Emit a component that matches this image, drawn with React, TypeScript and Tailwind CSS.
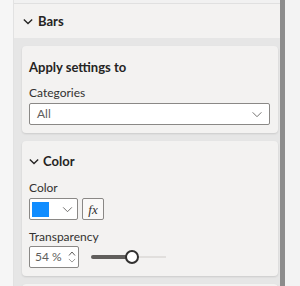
import React from 'react'

const font = { fontFamily: 'Lato, "Open Sans", sans-serif' }

const Chevron = ({ className = '' }: { className?: string }) => (
  <svg viewBox="0 0 12 8" className={className} fill="none" stroke="currentColor" strokeWidth="1.6">
    <polyline points="1,1.5 6,6.5 11,1.5" />
  </svg>
)

const ThinChevron = ({ className = '' }: { className?: string }) => (
  <svg viewBox="0 0 12 8" className={className} fill="none" stroke="currentColor" strokeWidth="1">
    <polyline points="1,1.5 6,6.5 11,1.5" />
  </svg>
)

const Card = ({ children }: { children: React.ReactNode }) => (
  <div className="shrink-0 rounded-[4px] bg-[#f3f2f1] shadow-[0_1px_2px_rgba(0,0,0,0.12)] pl-[7px] pr-[8px]">
    {children}
  </div>
)

export default function App() {
  return (
    <div className="w-[300px] h-[286px] flex bg-[#f3f3f3] overflow-hidden text-[#252423]" style={font}>
      <div className="w-[14px] bg-[#f6f6f6] border-r border-[#e2e2e2]" />
      <div className="w-[266px] flex flex-col min-h-0">
        <div className="shrink-0 h-[4px] bg-[#f1f1f1] border-b border-[#e0e0e0]" />
        <div className="shrink-0 h-[34px] bg-[#f3f2f1] flex items-center pl-[9px] gap-[5px] pt-[1px]">
          <Chevron className="w-[10px] h-[7px] text-[#252423]" />
          <span className="text-[13px] font-bold leading-none">Bars</span>
        </div>
        <div className="flex-1 min-h-0 overflow-hidden bg-[#e6e6e6] pl-[8px] pr-[2px] pt-[8px] flex flex-col gap-[8px]">
          <Card>
            <div className="pt-[13px] pb-[8px] flex flex-col">
              <div className="text-[13px] font-bold leading-[16px]">Apply settings to</div>
              <div className="mt-[10px] text-[12px] leading-[16px] text-[#323130]">Categories</div>
              <div className="mt-[2px] h-[22px] bg-white border border-[#8a8886] rounded-[2px] flex items-center justify-between pl-[7px] pr-[6px]">
                <span className="text-[12px] text-[#605e5c]">All</span>
                <ThinChevron className="w-[12px] h-[7px] text-[#605e5c]" />
              </div>
            </div>
          </Card>
          <Card>
            <div className="pt-[12px] pb-[8px] flex flex-col">
              <div className="flex items-center gap-[4px] h-[16px]">
                <Chevron className="w-[10px] h-[7px] text-[#252423]" />
                <span className="text-[13px] font-bold leading-none">Color</span>
              </div>
              <div className="mt-[11px] text-[12px] leading-[16px] text-[#323130]">Color</div>
              <div className="mt-[2px] flex gap-[4px]">
                <div className="w-[49px] h-[22px] bg-white border border-[#8a8886] rounded-[2px] flex items-center pl-[2px] pr-[4px] justify-between">
                  <div className="w-[17px] h-[15px] bg-[#118dff]" />
                  <ThinChevron className="w-[11px] h-[7px] text-[#605e5c]" />
                </div>
                <div className="w-[22px] h-[22px] bg-[#faf9f8] border border-[#8a8886] rounded-[2px] flex items-center justify-center">
                  <span className="text-[13px] italic text-[#323130] leading-none" style={{ fontFamily: '"Liberation Serif", serif' }}>fx</span>
                </div>
              </div>
              <div className="mt-[9px] text-[12px] leading-[16px] text-[#323130]">Transparency</div>
              <div className="mt-[1px] flex items-center">
                <div className="w-[50px] h-[22px] bg-white border border-[#8a8886] rounded-[2px] flex items-center justify-between pl-[5px] pr-[2px]">
                  <span className="text-[12px] text-[#605e5c]">54 %</span>
                  <div className="flex flex-col gap-[2px]">
                    <svg viewBox="0 0 8 5" className="w-[8px] h-[5px] text-[#605e5c]" fill="none" stroke="currentColor" strokeWidth="1">
                      <polyline points="1,4.5 4,1 7,4.5" />
                    </svg>
                    <ThinChevron className="w-[8px] h-[5px] text-[#605e5c]" />
                  </div>
                </div>
                <div className="relative ml-[12px] w-[75px] h-[16px] flex items-center">
                  <div className="w-[41px] h-[4px] rounded-full bg-[#605e5c]" />
                  <div className="flex-1 h-[2px] bg-[#e1dfdd]" />
                  <div className="absolute left-[34px] top-[1px] w-[14px] h-[14px] rounded-full bg-white border-2 border-[#323130]" />
                </div>
              </div>
            </div>
          </Card>
          <Card>
            <div className="h-[20px]" />
          </Card>
        </div>
      </div>
      <div className="w-[5px] bg-[#8c8c8c]" />
      <div className="flex-1 bg-[#f3f3f3]" />
    </div>
  )
}
